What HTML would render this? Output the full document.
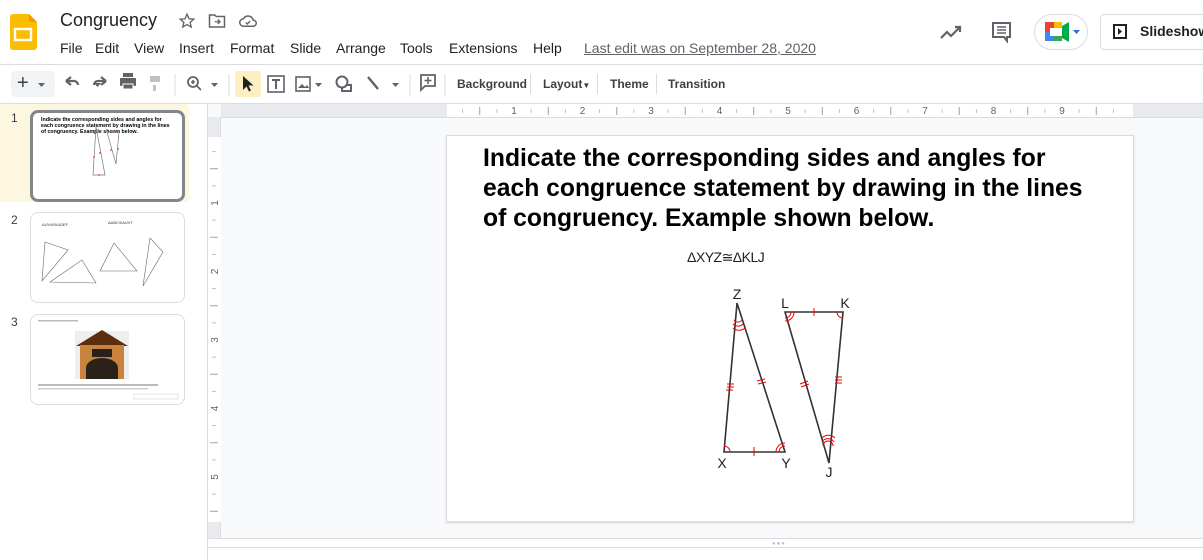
<!DOCTYPE html>
<html><head><meta charset="utf-8">
<style>
*{margin:0;padding:0;box-sizing:border-box}
body{width:1203px;height:560px;overflow:hidden;background:#fff;font-family:"Liberation Sans",Arial,sans-serif;position:relative;color:#202124}
.abs{position:absolute}
.tb{font-size:12px;color:#3c4043;font-weight:bold}
</style></head><body>
<svg class="abs" style="left:10px;top:14px" width="27" height="36" viewBox="0 0 27 36"><path d="M3 0h16l8 8v25a3 3 0 0 1-3 3H3a3 3 0 0 1-3-3V3a3 3 0 0 1 3-3z" fill="#fbbc04"/><path d="M19 0l8 8h-8z" fill="#f29900"/><rect x="5" y="15" width="16" height="11" fill="none" stroke="#fff" stroke-width="2.4"/></svg>
<div class="abs" style="left:60px;top:10px;font-size:18px;color:#202124">Congruency</div>
<svg class="abs" style="left:178px;top:12px" width="18" height="18" viewBox="0 0 24 24"><path d="M12 3l2.7 6 6.3.6-4.8 4.2 1.4 6.2L12 16.8 6.4 20l1.4-6.2L3 9.6 9.3 9z" fill="none" stroke="#5f6368" stroke-width="1.8"/></svg>
<svg class="abs" style="left:208px;top:13px" width="18" height="16" viewBox="0 0 24 20"><path d="M2 2h7l2 2h11v14H2z" fill="none" stroke="#5f6368" stroke-width="2"/><path d="M9 11h7M13 8l3 3-3 3" fill="none" stroke="#5f6368" stroke-width="1.8"/></svg>
<svg class="abs" style="left:239px;top:14px" width="18" height="14" viewBox="0 0 24 18"><path d="M6 16a5 5 0 0 1 0-10 7 7 0 0 1 13 2 4 4 0 0 1 0 8z" fill="none" stroke="#5f6368" stroke-width="2"/><path d="M9 11l2 2 4-4" fill="none" stroke="#5f6368" stroke-width="1.8"/></svg>
<div class="abs" style="left:60px;top:40px;font-size:14px;color:#202124">
<span class="abs" style="left:0">File</span><span class="abs" style="left:35px">Edit</span><span class="abs" style="left:74px">View</span><span class="abs" style="left:119px">Insert</span><span class="abs" style="left:170px">Format</span><span class="abs" style="left:230px">Slide</span><span class="abs" style="left:276px">Arrange</span><span class="abs" style="left:340px">Tools</span><span class="abs" style="left:389px">Extensions</span><span class="abs" style="left:473px">Help</span>
<span class="abs" style="left:524px;color:#5f6368;text-decoration:underline;white-space:nowrap">Last edit was on September 28, 2020</span></div>
<svg class="abs" style="left:940px;top:24px" width="22" height="16" viewBox="0 0 22 16"><path d="M1 14l6-6 4 4 8-8" fill="none" stroke="#5f6368" stroke-width="2.2"/><path d="M15 3h5v5" fill="none" stroke="#5f6368" stroke-width="2.2"/></svg>
<svg class="abs" style="left:991px;top:21px" width="22" height="22" viewBox="0 0 22 22"><path d="M2 2h17v14h-3v4l-3-4H2z" fill="none" stroke="#5f6368" stroke-width="2"/><path d="M6 6h9M6 9h9M6 12h9" stroke="#5f6368" stroke-width="1.6"/></svg>
<div class="abs" style="left:1034px;top:14px;width:54px;height:36px;border:1px solid #dadce0;border-radius:18px"></div>
<svg class="abs" style="left:1044px;top:21px" width="40" height="22" viewBox="0 0 40 22"><rect x="1" y="1" width="9" height="10" fill="#ea4335"/><rect x="10" y="1" width="8" height="6" fill="#fbbc04"/><rect x="1" y="11" width="9" height="9" fill="#4285f4"/><rect x="10" y="15" width="8" height="5" fill="#34a853"/><path d="M18 5l7-4v20l-7-4z" fill="#00ac47"/><rect x="6" y="7" width="8" height="8" fill="#fff"/><path d="M29 9h7l-3.5 4z" fill="#1a73e8"/></svg>
<div class="abs" style="left:1100px;top:14px;width:120px;height:36px;border:1px solid #dadce0;border-radius:4px"></div>
<svg class="abs" style="left:1113px;top:24px" width="14" height="15" viewBox="0 0 14 15"><rect x="1" y="1" width="12" height="13" fill="none" stroke="#202124" stroke-width="2"/><path d="M5 4l4 3.5-4 3.5z" fill="#202124"/></svg>
<div class="abs" style="left:1140px;top:23px;font-size:14px;font-weight:bold;color:#202124">Slideshow</div>
<div class="abs" style="left:0;top:64px;width:1203px;height:1px;background:#dadce0"></div>
<div class="abs" style="left:11px;top:71px;width:44px;height:26px;background:#f1f3f4;border-radius:4px"></div>
<div class="abs" style="left:17px;top:72px;font-size:20px;color:#3c4043">+</div>
<svg class="abs" style="left:0;top:66px" width="460" height="36">
<g fill="#5f6368">
<path d="M38 17h7l-3.5 4z"/><path d="M94 17h7l-3.5 4z"/><path d="M211 17h7l-3.5 4z"/><path d="M315 17h7l-3.5 4z"/><path d="M392 17h7l-3.5 4z"/>
</g>
<path d="M66 15l5-4M66 15l5 4M66 15h8a4 4 0 0 1 4 4" fill="none" stroke="#5f6368" stroke-width="2.2"/>
<path d="M106 15l-5-4M106 15l-5 4M106 15h-8a4 4 0 0 0-4 4" fill="none" stroke="#5f6368" stroke-width="2.2"/>
<path d="M123 11h10v-4h-10z" fill="#5f6368"/><rect x="120" y="12" width="16" height="8" rx="1" fill="#5f6368"/><rect x="123" y="18" width="10" height="5" fill="#5f6368" stroke="#fff" stroke-width="1"/>
<path d="M150 10h10v6h-10zM156 16v3h-3v6h3" fill="#bdc1c6"/>
<line x1="175" y1="8" x2="175" y2="30" stroke="#dadce0"/>
<circle cx="193" cy="16" r="5" fill="none" stroke="#5f6368" stroke-width="1.8"/><path d="M197 20l4 4M191 16h4M193 14v4" stroke="#5f6368" stroke-width="1.6"/>
<line x1="229" y1="8" x2="229" y2="30" stroke="#dadce0"/>
<rect x="235" y="5" width="26" height="26" rx="3" fill="#feefc3"/>
<path d="M243 10v14l3.5-3.5 2.5 5 2-1-2.5-5h5z" fill="#202124"/>
<rect x="268" y="10" width="16" height="16" fill="none" stroke="#5f6368" stroke-width="1.6"/><path d="M272 14h8M276 14v9" stroke="#5f6368" stroke-width="2"/>
<rect x="296" y="11" width="14" height="14" fill="none" stroke="#5f6368" stroke-width="1.6"/><path d="M298 22l4-4 3 3 2-2 2 3z" fill="#5f6368"/>
<circle cx="342" cy="16" r="5.5" fill="none" stroke="#5f6368" stroke-width="2"/><path d="M346 19h5v6h-9v-3" fill="none" stroke="#5f6368" stroke-width="2"/>
<path d="M368 11l10 12" stroke="#5f6368" stroke-width="2.4"/>
<line x1="410" y1="8" x2="410" y2="30" stroke="#dadce0"/>
<path d="M421 9h14v11h-10l-4 4z" fill="none" stroke="#5f6368" stroke-width="1.8"/><path d="M428 11v7M424.5 14.5h7" stroke="#5f6368" stroke-width="1.6"/>
<line x1="445" y1="8" x2="445" y2="30" stroke="#dadce0"/>
</svg>
<div class="abs tb" style="left:457px;top:77px">Background</div>
<div class="abs" style="left:530px;top:74px;width:1px;height:20px;background:#dadce0"></div>
<div class="abs tb" style="left:543px;top:77px">Layout<span style="font-size:8px">▼</span></div>
<div class="abs" style="left:597px;top:74px;width:1px;height:20px;background:#dadce0"></div>
<div class="abs tb" style="left:610px;top:77px">Theme</div>
<div class="abs" style="left:656px;top:74px;width:1px;height:20px;background:#dadce0"></div>
<div class="abs tb" style="left:668px;top:77px">Transition</div>
<div class="abs" style="left:0;top:103px;width:1203px;height:1px;background:#dadce0"></div>
<div class="abs" style="left:0;top:104px;width:189px;height:98px;background:#fef7e0;border-radius:0 4px 4px 0"></div>
<div class="abs" style="left:207px;top:104px;width:1px;height:456px;background:#dadce0"></div>
<div class="abs" style="left:11px;top:111px;font-size:12px;color:#3c4043">1</div>
<div class="abs" style="left:11px;top:213px;font-size:12px;color:#3c4043">2</div>
<div class="abs" style="left:11px;top:315px;font-size:12px;color:#3c4043">3</div>
<div class="abs" style="left:30px;top:110px;width:155px;height:92px;border:3px solid #80868b;border-radius:8px;background:#fff;overflow:hidden">
<div style="font-size:5.3px;font-weight:bold;line-height:6px;margin:4px 0 0 8px;color:#000">Indicate the corresponding sides and angles for<br>each congruence statement by drawing in the lines<br>of congruency. Example shown below.</div>
<svg class="abs" style="left:0;top:0" width="150" height="88"><path d="M63 14L60 62h12zM74 19h12l-3 32z" fill="none" stroke="#777" stroke-width=".7"/><g fill="#e57"><circle cx="61" cy="44" r="1"/><circle cx="67" cy="40" r="1"/><circle cx="66" cy="62" r="1"/><circle cx="80" cy="19" r="1"/><circle cx="85" cy="36" r="1"/><circle cx="78" cy="37" r="1"/></g></svg>
</div>
<div class="abs" style="left:30px;top:212px;width:155px;height:91px;border:1px solid #dadce0;border-radius:8px;background:#fff"></div>
<svg class="abs" style="left:30px;top:212px" width="155" height="91"><g font-size="4" fill="#333"><text x="12" y="14">ΔUVW≅ΔDEF</text><text x="78" y="12">ΔABC≅ΔUVT</text></g>
<path d="M15 30L12 69 38 38zM20 70l32-22 14 23zM84 31l-14 28h37zM120 26l-7 48 20-34z" fill="none" stroke="#666" stroke-width=".6"/></svg>
<div class="abs" style="left:30px;top:314px;width:155px;height:91px;border:1px solid #dadce0;border-radius:8px;background:#fff"></div>
<svg class="abs" style="left:30px;top:314px" width="155" height="91"><rect x="45" y="17" width="54" height="48" fill="#eee"/><path d="M46 32l26-16 26 16z" fill="#5a2e0e"/><rect x="50" y="31" width="44" height="34" fill="#c8843f"/><rect x="62" y="35" width="20" height="8" fill="#2a2218"/><path d="M56 65V54a16 10 0 0 1 32 0v11z" fill="#2a2218"/><rect x="8" y="70" width="120" height="2" fill="#bbb"/><rect x="8" y="74" width="110" height="1.5" fill="#ccc"/><rect x="104" y="80" width="44" height="5" fill="none" stroke="#ccc" stroke-width=".5"/><rect x="8" y="6" width="40" height="1.5" fill="#bbb"/></svg>
<div class="abs" style="left:208px;top:104px;width:995px;height:434px;background:#f8f9fa"></div>
<div class="abs" style="left:221px;top:104px;width:982px;height:14px;background:#e8eaed;border-bottom:1px solid #dadce0"></div>
<div class="abs" style="left:447px;top:104px;width:686px;height:13px;background:#fff"></div>
<div class="abs" style="left:208px;top:117px;width:13px;height:421px;background:#e8eaed;border-right:1px solid #dadce0"></div>
<div class="abs" style="left:208px;top:137px;width:13px;height:385px;background:#fff"></div>
<svg class="abs" style="left:0;top:0" width="1203" height="560" id="rul"></svg>
<div class="abs" style="left:208px;top:538px;width:995px;height:1px;background:#dadce0"></div>
<div class="abs" style="left:208px;top:547px;width:995px;height:1px;background:#dadce0"></div>
<div class="abs" style="left:772px;top:541px;font-size:6px;color:#bdc1c6;letter-spacing:1px">●●●</div>
<div class="abs" style="left:446px;top:135px;width:688px;height:387px;background:#fff;border:1px solid #dadce0;box-shadow:0 1px 2px rgba(0,0,0,.15)"></div>
<div class="abs" style="left:483px;top:144px;font-size:24.7px;font-weight:bold;line-height:30px;color:#000;white-space:nowrap">Indicate the corresponding sides and angles for<br>each congruence statement by drawing in the lines<br>of congruency. Example shown below.</div>
<div class="abs" style="left:687px;top:249px;font-size:14px;color:#222;letter-spacing:-0.5px">ΔXYZ≅ΔKLJ</div>
<svg class="abs" style="left:0;top:0" width="1203" height="560">
<g fill="none" stroke="#333" stroke-width="1.6"><path d="M737 303L724 452h61zM785 312h58l-14 151z"/></g>
<g fill="none" stroke="#e00" stroke-width="1">
<path d="M754 447v9M814 308v8"/>
<path d="M727 384h7M727 387h7M726 390h7"/>
<path d="M835 377h7M835 380h7M835 383h7"/>
<path d="M757 381l8-2M758 384l8-2"/>
<path d="M800 384l8-3M801 387l8-3"/>
<path d="M724 446a6 6 0 0 1 6 6"/>
<path d="M785 446a6 6 0 0 0-6 6M785 443a9 9 0 0 0-9 9"/>
<path d="M785 318a6 6 0 0 0 6-6M785 321a9 9 0 0 0 9-9"/>
<path d="M843 318a6 6 0 0 1-6-6"/>
<path d="M734 320a5 5 0 0 0 8 0M733 324a7 7 0 0 0 10 0M733 328a9 9 0 0 0 12 0"/>
<path d="M823 446a5 5 0 0 1 10 0M822 442a7 7 0 0 1 12 0M822 438a9 9 0 0 1 13 0"/>
</g>
<g font-family="Liberation Sans,Arial,sans-serif" font-size="14" fill="#222" text-anchor="middle">
<text x="737" y="299">Z</text><text x="785" y="308">L</text><text x="845" y="308">K</text><text x="722" y="468">X</text><text x="786" y="468">Y</text><text x="829" y="477">J</text></g>
</svg>
<script>
var s='',g=document.getElementById('rul');
for(var i=0;i<40;i++){var x=445.5+i*17.125;if(x>1133)break;var m=i%4;
if(m==0){if(i>0)s+='<text x="'+x+'" y="114" font-size="10" fill="#5f6368" text-anchor="middle" font-family="Liberation Sans">'+(i/4)+'</text>';}
else if(m==2)s+='<line x1="'+x+'" y1="107" x2="'+x+'" y2="115" stroke="#9aa0a6"/>';
else s+='<line x1="'+x+'" y1="109" x2="'+x+'" y2="113" stroke="#bdc1c6"/>';}
for(var i=0;i<40;i++){var y=134.5+i*17.125;if(y>526)break;var m=i%4;
if(m==0){if(i>0)s+='<text x="0" y="0" font-size="10" fill="#5f6368" text-anchor="middle" font-family="Liberation Sans" transform="translate(218 '+y+') rotate(-90)">'+(i/4)+'</text>';}
else if(m==2)s+='<line x1="210" y1="'+y+'" x2="218" y2="'+y+'" stroke="#9aa0a6"/>';
else s+='<line x1="212" y1="'+y+'" x2="216" y2="'+y+'" stroke="#bdc1c6"/>';}
g.innerHTML=s;
</script>
</body></html>
